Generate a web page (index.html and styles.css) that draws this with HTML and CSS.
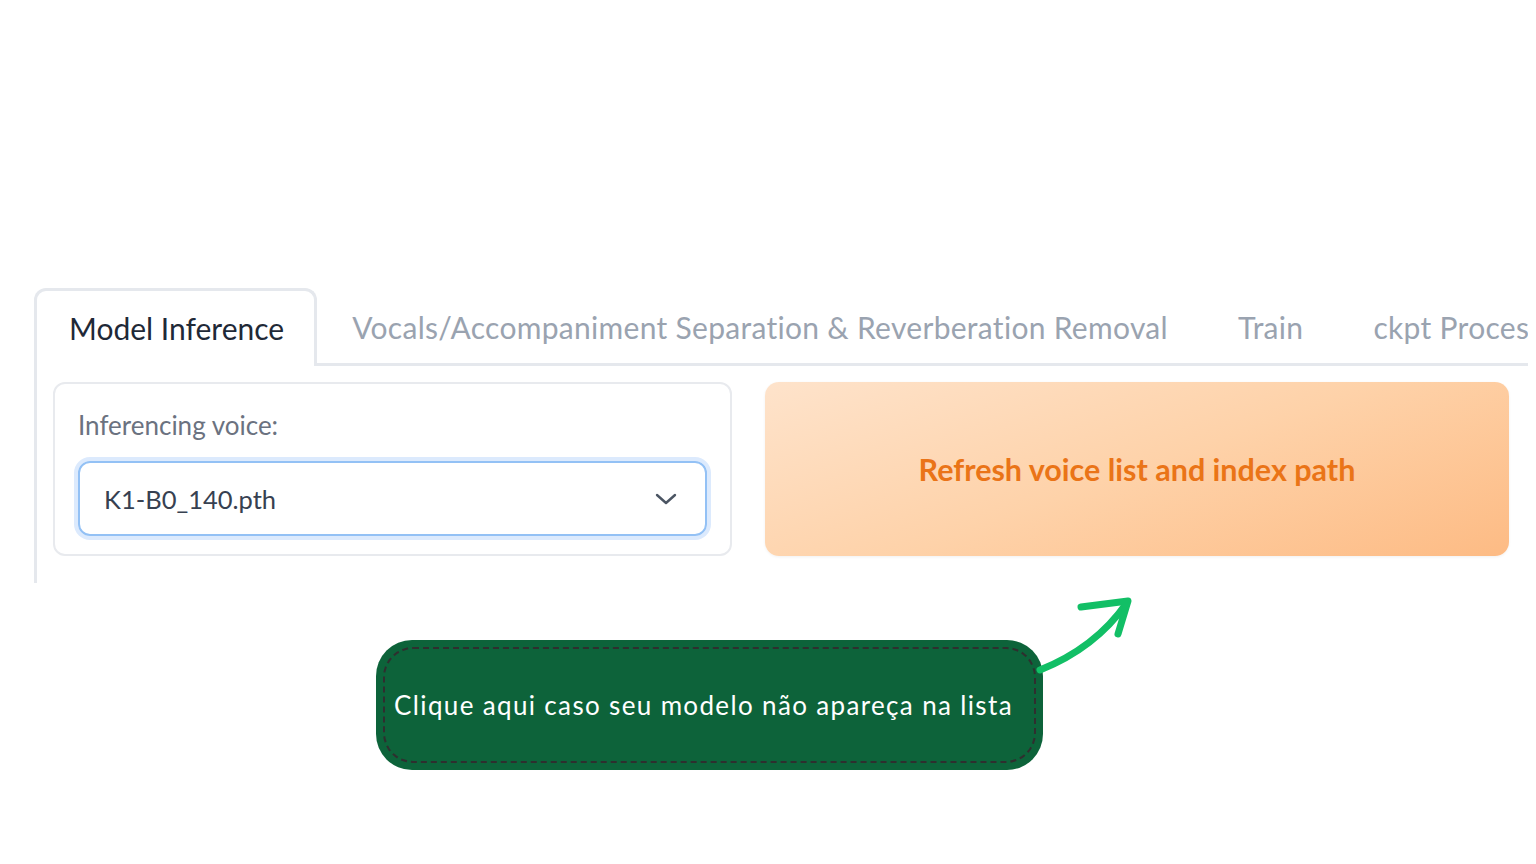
FILE: index.html
```html
<!DOCTYPE html>
<html lang="en">
<head>
<meta charset="utf-8">
<title>Model Inference</title>
<link rel="stylesheet" href="styles.css">
</head>
<body>
<div class="page">
  <div class="app">
    <div class="tabs">
      <div class="tab active">Model Inference</div>
      <div class="tab">Vocals/Accompaniment Separation &amp; Reverberation Removal</div>
      <div class="tab">Train</div>
      <div class="tab">ckpt Processing</div>
    </div>
    <div class="panel">
      <div class="row">
        <div class="box">
          <div class="label">Inferencing voice:</div>
          <div class="select">
            <span class="value">K1-B0_140.pth</span>
            <svg class="chev" width="22" height="14" viewBox="0 0 22 14"><path d="M2 3 L11 11 L20 3" fill="none" stroke="#4b5563" stroke-width="2.4" stroke-linecap="round" stroke-linejoin="round"/></svg>
          </div>
        </div>
        <button class="refresh">Refresh voice list and index path</button>
      </div>
    </div>
  </div>
  <div class="callout">
    <div class="dash">Clique aqui caso seu modelo não apareça na lista</div>
  </div>
  <svg class="arrow" width="110" height="90" viewBox="1030 590 110 90">
    <path d="M1040 670 Q1095 648 1126 604" fill="none" stroke="#12bf66" stroke-width="7" stroke-linecap="round"/>
    <path d="M1081 607 L1128 601 L1118 634" fill="none" stroke="#12bf66" stroke-width="7" stroke-linecap="round" stroke-linejoin="round"/>
  </svg>
</div>
</body>
</html>
```
FILE: styles.css
```css
html, body {
  margin: 0;
  padding: 0;
  background: #ffffff;
}
.page {
  position: relative;
  width: 1536px;
  height: 864px;
  overflow: hidden;
  font-family: "Lato", "Liberation Sans", sans-serif;
}
.app {
  margin-left: 34px;
  padding-top: 288px;
  width: 1494px;
  overflow: hidden;
}
.tabs {
  display: flex;
  white-space: nowrap;
  border-bottom: 3px solid #e5e8ed;
  height: 75px;
}
.tab {
  padding: 0 35px;
  font-size: 30px;
  letter-spacing: 0.3px;
  line-height: 78px;
  color: #9aa3b0;
  flex: none;
}
.tab.active {
  color: #1f2937;
  background: #fff;
  border: 3px solid #e5e8ed;
  border-bottom: none;
  border-radius: 12px 12px 0 0;
  padding: 0 30px 0 32px;
  height: 75px;
  line-height: 75px;
  margin-bottom: -3px;
  letter-spacing: 0;
}
.panel {
  border-left: 3px solid #e5e8ed;
  padding: 16px 0 27px 16px;
}
.row {
  display: flex;
  gap: 33px;
  align-items: stretch;
}
.box {
  width: 679px;
  border: 2px solid #e8eaee;
  border-radius: 12px;
  padding: 25px 23px 18px 23px;
  box-sizing: border-box;
  height: 174px;
}
.label {
  font-size: 26px;
  line-height: 32px;
  color: #6b7280;
  margin-bottom: 20px;
}
.select {
  display: flex;
  align-items: center;
  justify-content: space-between;
  height: 75px;
  box-sizing: border-box;
  border: 2px solid #93c1f5;
  border-radius: 12px;
  box-shadow: 0 0 0 4px #dceafd;
  padding: 0 28px 0 24px;
}
.value {
  font-size: 25.5px;
  color: #374151;
}
.refresh {
  width: 744px;
  height: 174px;
  border: none;
  border-radius: 14px;
  background: linear-gradient(160deg, #fee3cb 0%, #fed2a9 50%, #fdbb84 100%);
  box-shadow: 0 1px 3px rgba(0,0,0,0.06);
  font-family: "Lato", "Liberation Sans", sans-serif;
  font-weight: 700;
  font-size: 30.5px;
  color: #ea7417;
  padding: 0;
}
.callout {
  position: absolute;
  left: 376px;
  top: 640px;
  width: 667px;
  height: 130px;
  background: #0d633a;
  border-radius: 36px;
  padding: 7px;
  box-sizing: border-box;
}
.dash {
  height: 100%;
  box-sizing: border-box;
  border: 2px dashed #2f2f2f;
  border-radius: 30px;
  display: flex;
  align-items: center;
  justify-content: center;
  padding-right: 12px;
  color: #ffffff;
  font-size: 26px;
  letter-spacing: 1.35px;
  font-weight: 400;
}
.arrow {
  position: absolute;
  left: 1030px;
  top: 590px;
}
```
